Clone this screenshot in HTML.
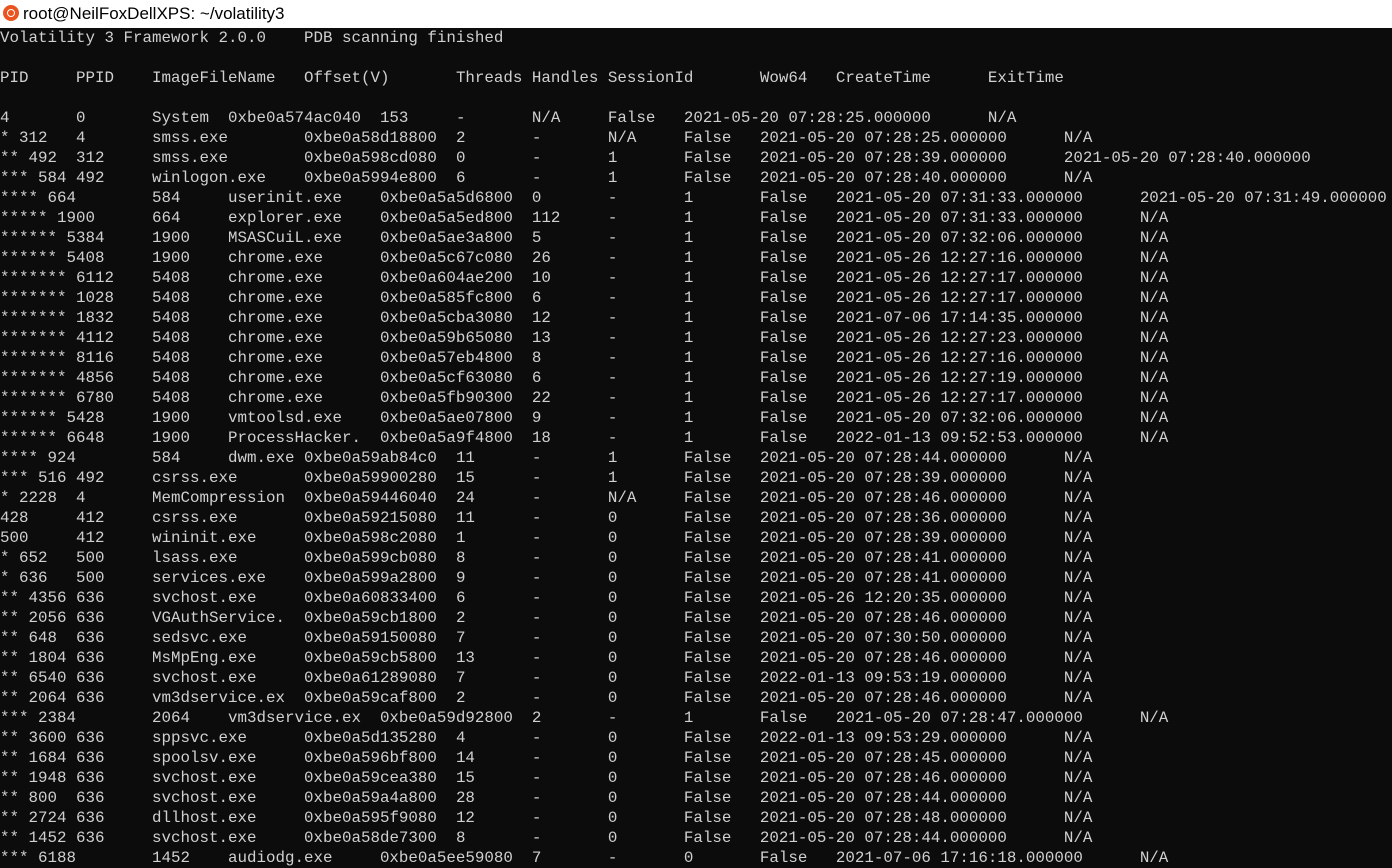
<!DOCTYPE html>
<html><head><meta charset="utf-8"><style>
html,body{margin:0;padding:0;width:1392px;height:867px;overflow:hidden;background:#0c0c0c}
.tb{position:absolute;left:0;top:0;width:1392px;height:28px;background:#fff;font-family:"Liberation Sans",sans-serif;font-size:17px;color:#000}
.tb span{position:absolute;left:23px;top:4px}
.ic{position:absolute;left:3px;top:5px;width:16px;height:16px;border-radius:50%;background:#e95420}
.ic:after{content:"";position:absolute;left:4px;top:4px;width:6px;height:6px;border:1.5px solid #fff;border-radius:50%}
pre{position:absolute;left:0;top:28px;margin:0;font-family:"Liberation Mono",monospace;font-size:15.83px;line-height:20px;color:#d0d0d0;tab-size:8;-moz-tab-size:8;white-space:pre;overflow:hidden;width:1392px}
</style></head><body>
<div class="tb"><div class="ic"></div><span>root@NeilFoxDellXPS: ~/volatility3</span></div>
<pre>Volatility 3 Framework 2.0.0	PDB scanning finished

PID	PPID	ImageFileName	Offset(V)	Threads	Handles	SessionId	Wow64	CreateTime	ExitTime

4	0	System	0xbe0a574ac040	153	-	N/A	False	2021-05-20 07:28:25.000000	N/A
* 312	4	smss.exe	0xbe0a58d18800	2	-	N/A	False	2021-05-20 07:28:25.000000	N/A
** 492	312	smss.exe	0xbe0a598cd080	0	-	1	False	2021-05-20 07:28:39.000000	2021-05-20 07:28:40.000000
*** 584	492	winlogon.exe	0xbe0a5994e800	6	-	1	False	2021-05-20 07:28:40.000000	N/A
**** 664	584	userinit.exe	0xbe0a5a5d6800	0	-	1	False	2021-05-20 07:31:33.000000	2021-05-20 07:31:49.000000
***** 1900	664	explorer.exe	0xbe0a5a5ed800	112	-	1	False	2021-05-20 07:31:33.000000	N/A
****** 5384	1900	MSASCuiL.exe	0xbe0a5ae3a800	5	-	1	False	2021-05-20 07:32:06.000000	N/A
****** 5408	1900	chrome.exe	0xbe0a5c67c080	26	-	1	False	2021-05-26 12:27:16.000000	N/A
******* 6112	5408	chrome.exe	0xbe0a604ae200	10	-	1	False	2021-05-26 12:27:17.000000	N/A
******* 1028	5408	chrome.exe	0xbe0a585fc800	6	-	1	False	2021-05-26 12:27:17.000000	N/A
******* 1832	5408	chrome.exe	0xbe0a5cba3080	12	-	1	False	2021-07-06 17:14:35.000000	N/A
******* 4112	5408	chrome.exe	0xbe0a59b65080	13	-	1	False	2021-05-26 12:27:23.000000	N/A
******* 8116	5408	chrome.exe	0xbe0a57eb4800	8	-	1	False	2021-05-26 12:27:16.000000	N/A
******* 4856	5408	chrome.exe	0xbe0a5cf63080	6	-	1	False	2021-05-26 12:27:19.000000	N/A
******* 6780	5408	chrome.exe	0xbe0a5fb90300	22	-	1	False	2021-05-26 12:27:17.000000	N/A
****** 5428	1900	vmtoolsd.exe	0xbe0a5ae07800	9	-	1	False	2021-05-20 07:32:06.000000	N/A
****** 6648	1900	ProcessHacker.	0xbe0a5a9f4800	18	-	1	False	2022-01-13 09:52:53.000000	N/A
**** 924	584	dwm.exe	0xbe0a59ab84c0	11	-	1	False	2021-05-20 07:28:44.000000	N/A
*** 516	492	csrss.exe	0xbe0a59900280	15	-	1	False	2021-05-20 07:28:39.000000	N/A
* 2228	4	MemCompression	0xbe0a59446040	24	-	N/A	False	2021-05-20 07:28:46.000000	N/A
428	412	csrss.exe	0xbe0a59215080	11	-	0	False	2021-05-20 07:28:36.000000	N/A
500	412	wininit.exe	0xbe0a598c2080	1	-	0	False	2021-05-20 07:28:39.000000	N/A
* 652	500	lsass.exe	0xbe0a599cb080	8	-	0	False	2021-05-20 07:28:41.000000	N/A
* 636	500	services.exe	0xbe0a599a2800	9	-	0	False	2021-05-20 07:28:41.000000	N/A
** 4356	636	svchost.exe	0xbe0a60833400	6	-	0	False	2021-05-26 12:20:35.000000	N/A
** 2056	636	VGAuthService.	0xbe0a59cb1800	2	-	0	False	2021-05-20 07:28:46.000000	N/A
** 648	636	sedsvc.exe	0xbe0a59150080	7	-	0	False	2021-05-20 07:30:50.000000	N/A
** 1804	636	MsMpEng.exe	0xbe0a59cb5800	13	-	0	False	2021-05-20 07:28:46.000000	N/A
** 6540	636	svchost.exe	0xbe0a61289080	7	-	0	False	2022-01-13 09:53:19.000000	N/A
** 2064	636	vm3dservice.ex	0xbe0a59caf800	2	-	0	False	2021-05-20 07:28:46.000000	N/A
*** 2384	2064	vm3dservice.ex	0xbe0a59d92800	2	-	1	False	2021-05-20 07:28:47.000000	N/A
** 3600	636	sppsvc.exe	0xbe0a5d135280	4	-	0	False	2022-01-13 09:53:29.000000	N/A
** 1684	636	spoolsv.exe	0xbe0a596bf800	14	-	0	False	2021-05-20 07:28:45.000000	N/A
** 1948	636	svchost.exe	0xbe0a59cea380	15	-	0	False	2021-05-20 07:28:46.000000	N/A
** 800	636	svchost.exe	0xbe0a59a4a800	28	-	0	False	2021-05-20 07:28:44.000000	N/A
** 2724	636	dllhost.exe	0xbe0a595f9080	12	-	0	False	2021-05-20 07:28:48.000000	N/A
** 1452	636	svchost.exe	0xbe0a58de7300	8	-	0	False	2021-05-20 07:28:44.000000	N/A
*** 6188	1452	audiodg.exe	0xbe0a5ee59080	7	-	0	False	2021-07-06 17:16:18.000000	N/A
</pre>
</body></html>
